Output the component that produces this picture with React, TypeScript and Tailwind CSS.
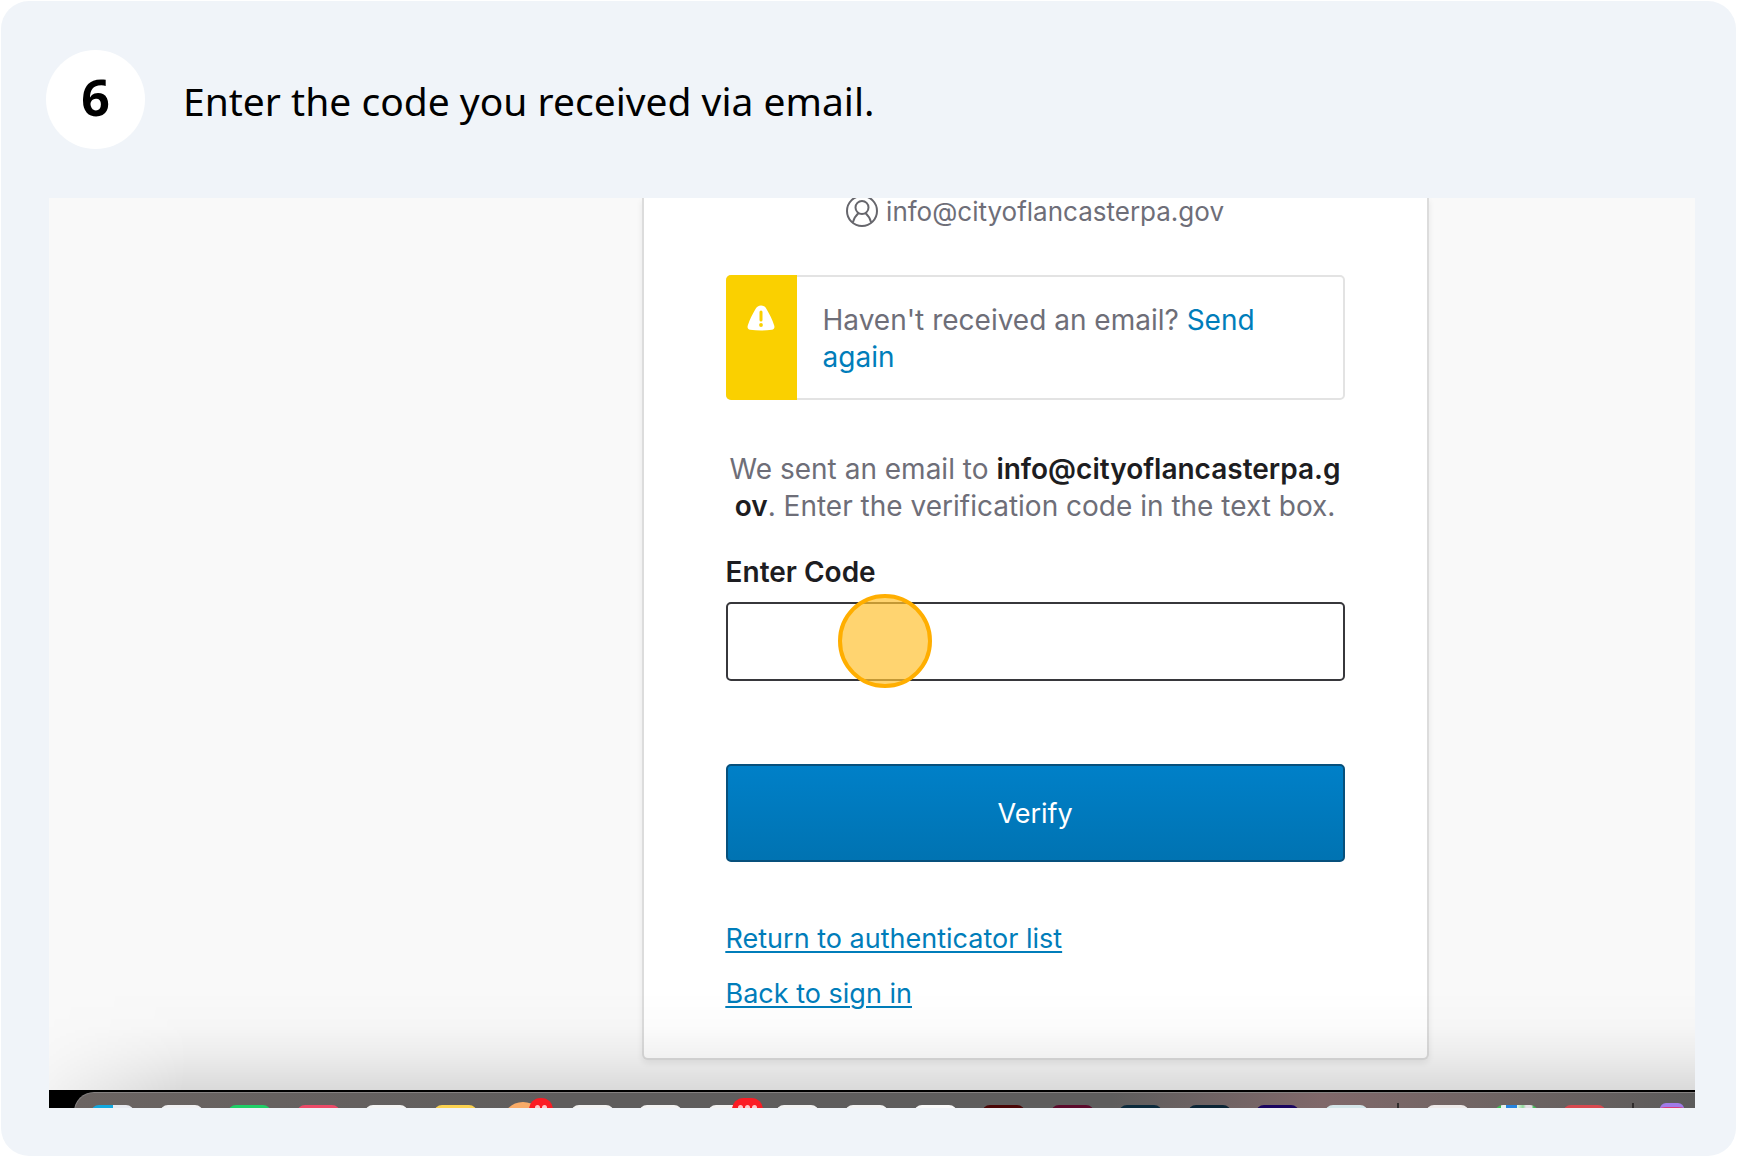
const apps = [
  'bg-linear-to-r from-[#12a9e0] from-50% to-[#e8eaf0] to-50%',
  'bg-[#f1f1f3]',
  'bg-[#1fd067]',
  'bg-[#ec4a68]',
  'bg-[#f4f4f4]',
  'bg-[#fbd250]',
  'contact',
  'bg-[#f3f3f3]',
  'bg-[#f3f3f3]',
  'mail',
  'bg-[#f3f3f3]',
  'bg-[#f3f3f3]',
  'bg-[#fafafa]',
  'bg-[#4a0606]',
  'bg-[#5c0a2c]',
  'bg-[#0c2b3d]',
  'bg-[#0b2536]',
  'bg-[#1a0560]',
  'bg-[#d5e6ea]',
];

const recentApps = [
  'bg-[#eeeaea]',
  'bg-linear-[90deg,#3fbf55_15%,#e6f3ee_15%,#e6f3ee_25%,#2684e0_25%,#2684e0_50%,#f2f6f2_50%,#8fd99a_65%,#e4dfe6_72%,#e4dfe6_85%,#3fbf55_90%]',
  'bg-[#d8484f]',
];

function Badge({ dots, className }: { dots: number; className: string }) {
  return (
    <span className={`absolute -top-[7px] flex h-[23px] justify-center gap-[2px] rounded-full bg-[#fb1c24] pt-[7px] ${className}`}>
      {Array.from({ length: dots }, (_, i) => (
        <span key={i} className="h-[10px] w-[5px] rounded-full bg-[#ffc9cb]" />
      ))}
    </span>
  );
}

function DockApp({ kind }: { kind: string }) {
  if (kind === 'contact') {
    return (
      <span className="relative h-[44px] w-[43px]">
        <span className="absolute -top-[3px] left-0 h-[42px] w-[42px] rounded-full bg-[#f8ab68]" />
        <Badge dots={2} className="left-[27px] w-[24px]" />
      </span>
    );
  }
  if (kind === 'mail') {
    return (
      <span className="relative h-[44px] w-[43px] rounded-[8px] bg-[#f3f3f3]">
        <Badge dots={3} className="left-[24px] w-[31px]" />
      </span>
    );
  }
  return <span className={`h-[44px] w-[43px] rounded-[8px] ${kind}`} />;
}

function Dock() {
  return (
    <div className="h-[18px] overflow-hidden bg-black pt-[2px] pl-[25px]" aria-hidden="true">
      <div className="flex h-[60px] items-start rounded-tl-[20px] border-t border-l border-[#858181] bg-linear-[90deg,#6b6462,#5f5d5d_30%,#5e5d5d_64%,#80686a_77%,#6e6463_88%,#5c5b5b] pt-[12px] pl-[16px]">
        <div className="flex flex-[1277] justify-between">
          {apps.map((kind, i) => (
            <DockApp key={i} kind={kind} />
          ))}
        </div>
        <span className="-mt-[2px] mr-[27px] ml-[29px] h-[40px] w-[2px] bg-[#2f2c2c]" />
        <div className="flex flex-[180] justify-between">
          {recentApps.map((kind, i) => (
            <DockApp key={i} kind={kind} />
          ))}
        </div>
        <span className="-mt-[2px] mr-[26px] ml-[26px] h-[40px] w-[2px] bg-[#2f2c2c]" />
        <span className="-mt-[2px] mr-[11px] h-[44px] w-[24px] rounded-[6px] border-t-4 border-[#a07be8] bg-[#d83a78]" />
      </div>
    </div>
  );
}

function UserIcon() {
  return (
    <svg viewBox="0 0 32 32" className="h-8 w-8 shrink-0" fill="none" stroke="#66666c" strokeWidth="2">
      <circle cx="16" cy="16" r="15" />
      <circle cx="16" cy="12.5" r="6.5" />
      <path d="M6.8 27.5C8.2 22.6 10.3 20 12.6 18M25.2 27.5C23.8 22.6 21.7 20 19.4 18" />
    </svg>
  );
}

function WarningIcon() {
  return (
    <svg viewBox="0 0 28 26" className="h-[26px] w-7">
      <path
        d="M14 0.500c-2.500 0-4.200 1.200-5.500 3.500C5.500 9 2.500 15 0.800 20.500c-.7 2.300.1 3.800 2.400 4.200 7 1.100 14.600 1.100 21.600 0 2.300-.4 3.100-1.900 2.400-4.200C25.500 15 22.500 9 19.500 4c-1.300-2.300-3-3.500-5.500-3.500z"
        fill="#fff"
      />
      <path d="M14 7v8" stroke="#fad000" strokeWidth="3" strokeLinecap="round" />
      <circle cx="14" cy="20" r="1.900" fill="#fad000" />
    </svg>
  );
}

export default function App() {
  return (
    <div className="bg-white p-px pb-[2px] font-['Noto_Sans',sans-serif]">
      <main className="rounded-[28px] bg-[#f0f4f9] pt-[49px] pr-[41px] pb-12 pl-12">
        <header className="-ml-[3px] flex items-center gap-[38px]">
          <div className="flex h-[99px] w-[99px] items-center justify-center rounded-full bg-white pb-[6px] text-[50px] leading-none font-bold text-black">
            6
          </div>
          <h1 className="pt-[3px] text-[39px] leading-[54px] text-black">Enter the code you received via email.</h1>
        </header>

        <section className="relative mt-[49px] overflow-hidden bg-[#f9f9f9] font-['Inter','Noto_Sans',sans-serif] text-[28px] leading-[37px] text-[#6e6e78]">
          <div className="pb-[30px]">
            <div className="ml-[36%] w-[787px] rounded-b-[6px] border-2 border-t-0 border-[#dcdcdc] bg-white px-[82px] pb-[46px] shadow-[0_3px_6px_rgba(0,0,0,0.08)]">
              <div className="flex h-[26px] items-center justify-center gap-2 text-[26px]">
                <UserIcon />
                <span>info@cityoflancasterpa.gov</span>
              </div>

              <div className="mt-[51px] flex rounded-[5px] border-2 border-[#e3e3e3]">
                <div className="-my-[2px] -ml-[2px] w-[71px] rounded-l-[5px] bg-[#fad000] pt-[30px] pl-[21px]">
                  <WarningIcon />
                </div>
                <p className="flex-1 pt-[25px] pr-[60px] pb-[22px] pl-[26px]">
                  Haven't received an email?{' '}
                  <a href="#send" className="text-[#007dba]">Send again</a>
                </p>
              </div>

              <p className="mt-[51px] text-center whitespace-nowrap">
                We sent an email to <strong className="font-semibold text-[#1d1d21]">info@cityoflancasterpa.g<br />ov</strong>. Enter the verification code in the text box.
              </p>

              <form onSubmit={(e) => e.preventDefault()}>
                <label htmlFor="code" className="mt-[29px] block font-semibold text-[#1d1d21]">
                  Enter Code
                </label>
                <div className="relative mt-[11px]">
                  <input
                    id="code"
                    type="text"
                    className="block h-[79px] w-full rounded-[5px] border-2 border-[#37373b] bg-white px-4 outline-none"
                  />
                  <span className="pointer-events-none absolute -top-[8px] left-[112px] h-[94px] w-[94px] rounded-full border-4 border-[#ffae00] bg-[#ffc233]/70" />
                </div>
                <button
                  type="submit"
                  className="mt-[83px] block h-[98px] w-full rounded-[5px] border-2 border-[#07507c] bg-linear-to-b from-[#0080c8] to-[#0073b2] text-[27px] text-white"
                >
                  Verify
                </button>
              </form>

              <nav className="mt-[58px] flex flex-col items-start gap-[18px] text-[27px] text-[#007dba] underline decoration-2 underline-offset-3">
                <a href="#authenticators">Return to authenticator list</a>
                <a href="#signin">Back to sign in</a>
              </nav>
            </div>
          </div>
          <div className="pointer-events-none absolute inset-x-0 bottom-[18px] h-[100px] bg-linear-[180deg,transparent,rgba(0,0,0,0.012)_35%,rgba(0,0,0,0.05)_65%,rgba(0,0,0,0.12)] [mask-image:linear-gradient(100deg,rgba(0,0,0,0.1),#000_150px)]" />
          <Dock />
        </section>
      </main>
    </div>
  );
}
